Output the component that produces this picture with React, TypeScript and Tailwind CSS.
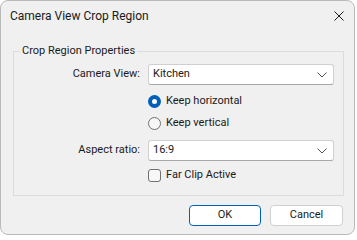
import React from "react";

function Chevron() {
  return (
    <svg width="10" height="6" viewBox="0 0 10 6" fill="none">
      <path d="M0.5 0.5 L5 5 L9.5 0.5" stroke="#505050" strokeWidth="1" />
    </svg>
  );
}

function Select({ value }: { value: string }) {
  return (
    <div className="flex h-[21px] w-[186px] items-center justify-between rounded-[3px] border border-[#d0d0d0] border-b-[#a8a8a8] bg-white pl-[4px] pr-[6px]">
      <span>{value}</span>
      <Chevron />
    </div>
  );
}

export default function App() {
  return (
    <div className="h-[240px] w-[357px] bg-white font-['Roboto',sans-serif] text-[11px] text-[#1a1a1a]">
      <div className="flex h-[235px] w-[355px] flex-col rounded-[8px] border border-[#b9b9b9] bg-[#f0f0f0]">
        <div className="flex h-[30px] items-center justify-between pl-[9px] pr-[10px]">
          <span className="text-[12px]">Camera View Crop Region</span>
          <svg width="10" height="10" viewBox="0 0 10 10">
            <path d="M0.5 0.5 L9.5 9.5 M9.5 0.5 L0.5 9.5" stroke="#1a1a1a" strokeWidth="1" />
          </svg>
        </div>
        <div className="relative ml-[12px] mt-[20px] h-[145px] w-[331px] border border-[#dcdcdc]">
          <span className="absolute left-[6px] top-[-10px] bg-[#f0f0f0] px-[2px] leading-[18px]">
            Crop Region Properties
          </span>
          <div className="mt-[12px] grid grid-cols-[126px_186px] items-center gap-x-[8px]">
            <span className="text-right">Camera View:</span>
            <Select value="Kitchen" />
          </div>
          <div className="ml-[134px] mt-[5px] flex flex-col">
            <div className="flex h-[22px] items-center gap-[5px]">
              <span className="flex h-[13px] w-[13px] items-center justify-center rounded-full bg-[#005fb8]">
                <span className="h-[5px] w-[5px] rounded-full bg-white" />
              </span>
              <span>Keep horizontal</span>
            </div>
            <div className="flex h-[22px] items-center gap-[5px]">
              <span className="h-[13px] w-[13px] rounded-full border border-[#707070] bg-[#f7f7f7]" />
              <span>Keep vertical</span>
            </div>
          </div>
          <div className="mt-[6px] grid grid-cols-[126px_186px] items-center gap-x-[8px]">
            <span className="text-right">Aspect ratio:</span>
            <Select value="16:9" />
          </div>
          <div className="ml-[134px] mt-[3px] flex h-[22px] items-center gap-[5px]">
            <span className="h-[13px] w-[13px] rounded-[3px] border border-[#707070] bg-[#f7f7f7]" />
            <span>Far Clip Active</span>
          </div>
        </div>
        <div className="mt-[9px] flex justify-end gap-[9px] pr-[11px]">
          <button className="h-[21px] w-[72px] rounded-[4px] border border-[#005fb8] bg-white text-[11px]">
            OK
          </button>
          <button className="h-[21px] w-[73px] rounded-[4px] border border-[#d0d0d0] bg-white text-[11px]">
            Cancel
          </button>
        </div>
      </div>
    </div>
  );
}
